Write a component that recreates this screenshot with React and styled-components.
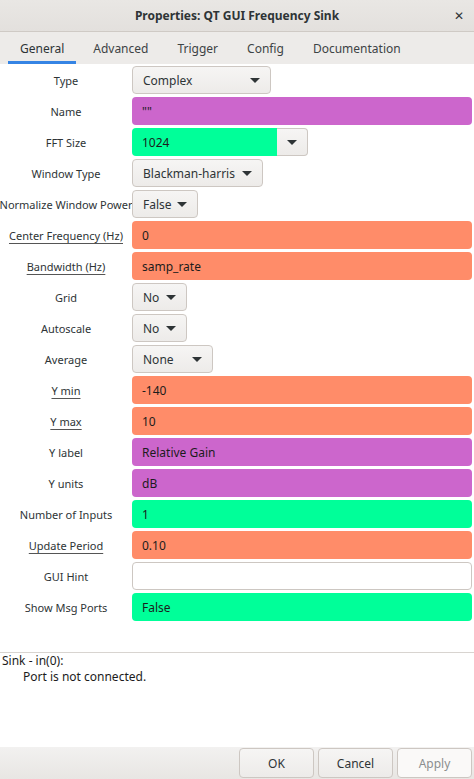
import styled, { createGlobalStyle } from "styled-components";

const Global = createGlobalStyle`
  html, body { margin: 0; padding: 0; background: #ffffff; }
  body { font-family: "Noto Sans", "DejaVu Sans", sans-serif; color: #2e3436; }
`;

const Window = styled.div`
  width: 474px;
  height: 779px;
  display: flex;
  flex-direction: column;
  background: #ffffff;
  overflow: hidden;
`;

const TitleBar = styled.div`
  height: 31px;
  flex: none;
  display: flex;
  align-items: center;
  justify-content: center;
  position: relative;
  background: linear-gradient(#e9e7e4, #e3e0dd);
  border-bottom: 1px solid #cfcac5;
  font-size: 12px;
  font-weight: bold;
  color: #2e3436;
`;

const Close = styled.span`
  position: absolute;
  right: 10px;
  top: 7px;
  font-size: 12px;
  font-weight: bold;
  color: #2e3436;
`;

const Tabs = styled.div`
  height: 32px;
  flex: none;
  display: flex;
  align-items: stretch;
  background: #edebe9;
  padding-left: 8px;
  gap: 5px;
`;

const Tab = styled.div`
  display: flex;
  align-items: center;
  padding: 0 12px;
  font-size: 12px;
  color: ${({ active }) => (active ? "#2e3436" : "#3d4345")};
  box-shadow: ${({ active }) => (active ? "inset 0 -3px 0 #3584e4" : "none")};
`;

const Form = styled.div`
  display: grid;
  grid-template-columns: 132px 1fr;
  grid-auto-rows: 28px;
  row-gap: 3px;
  padding: 2px 2px 0 0;
  flex: none;
`;

const Label = styled.div`
  display: flex;
  align-items: center;
  justify-content: center;
  font-size: 11px;
  white-space: nowrap;
  color: #2e3436;
  span {
    text-decoration: ${({ under }) => (under ? "underline" : "none")};
    text-underline-offset: 3px;
    text-decoration-color: #555;
  }
`;

const Field = styled.div`
  display: flex;
  align-items: center;
  padding-left: 10px;
  box-sizing: border-box;
  border-radius: 4px;
  font-size: 12px;
  color: #1c1c1c;
  background: ${({ bg }) => bg};
  border: ${({ bg }) => (bg === "#ffffff" ? "1px solid #cdc7c2" : "none")};
`;

const ComboWrap = styled.div`
  display: flex;
`;

const Combo = styled.div`
  width: ${({ w }) => w}px;
  box-sizing: border-box;
  display: flex;
  align-items: center;
  justify-content: space-between;
  gap: 5px;
  padding: 0 10px;
  white-space: nowrap;
  border: 1px solid #cdc7c2;
  border-radius: 4px;
  background: linear-gradient(#f6f5f4, #edebe9);
  font-size: 12px;
  color: #2e3436;
`;

const Entry = styled.div`
  width: 145px;
  display: flex;
  align-items: center;
  padding-left: 10px;
  box-sizing: border-box;
  background: #00ff99;
  border-radius: 4px 0 0 4px;
  font-size: 12px;
  color: #1c1c1c;
`;

const DropBtn = styled.div`
  width: 30px;
  display: flex;
  align-items: center;
  justify-content: center;
  border: 1px solid #cdc7c2;
  border-left: none;
  border-radius: 0 4px 4px 0;
  background: linear-gradient(#f6f5f4, #edebe9);
`;

const Arrow = styled.span`
  flex: none;
  width: 0;
  height: 0;
  border-left: 5px solid transparent;
  border-right: 5px solid transparent;
  border-top: 5px solid #2e3436;
`;

const Divider = styled.div`
  margin-top: 31px;
  border-top: 1px solid #d8d4d0;
`;

const Messages = styled.div`
  flex: 1;
  padding: 0 2px;
  font-size: 12px;
  line-height: 16px;
  color: #1c1c1c;
`;

const Indent = styled.div`
  padding-left: 21px;
`;

const ButtonBar = styled.div`
  height: 32px;
  flex: none;
  display: flex;
  justify-content: flex-end;
  align-items: center;
  gap: 4px;
  padding-right: 2px;
  background: linear-gradient(#f2f1f0, #e8e6e3);
`;

const Button = styled.div`
  width: 75px;
  height: 30px;
  box-sizing: border-box;
  display: flex;
  align-items: center;
  justify-content: center;
  border: 1px solid #cdc7c2;
  border-radius: 4px;
  background: ${({ disabled }) => (disabled ? "#faf9f8" : "linear-gradient(#f6f5f4, #edebe9)")};
  color: ${({ disabled }) => (disabled ? "#8b8e8f" : "#2e3436")};
  font-size: 12px;
`;

const PURPLE = "#cc66cc";
const GREEN = "#00ff99";
const ORANGE = "#ff8c69";

const rows = [
  { label: "Type", combo: "Complex", w: 139 },
  { label: "Name", value: '""', bg: PURPLE },
  { label: "FFT Size", fft: "1024" },
  { label: "Window Type", combo: "Blackman-harris", w: 131 },
  { label: "Normalize Window Power", combo: "False", w: 66 },
  { label: "Center Frequency (Hz)", value: "0", bg: ORANGE, under: true },
  { label: "Bandwidth (Hz)", value: "samp_rate", bg: ORANGE, under: true },
  { label: "Grid", combo: "No", w: 55 },
  { label: "Autoscale", combo: "No", w: 55 },
  { label: "Average", combo: "None", w: 81 },
  { label: "Y min", value: "-140", bg: ORANGE, under: true },
  { label: "Y max", value: "10", bg: ORANGE, under: true },
  { label: "Y label", value: "Relative Gain", bg: PURPLE },
  { label: "Y units", value: "dB", bg: PURPLE },
  { label: "Number of Inputs", value: "1", bg: GREEN },
  { label: "Update Period", value: "0.10", bg: ORANGE, under: true },
  { label: "GUI Hint", value: "", bg: "#ffffff" },
  { label: "Show Msg Ports", value: "False", bg: GREEN },
];

const tabs = ["General", "Advanced", "Trigger", "Config", "Documentation"];

const renderField = (r) => {
  if (r.combo) {
    return (
      <ComboWrap key={r.label + "f"}>
        <Combo w={r.w}>
          <span>{r.combo}</span>
          <Arrow />
        </Combo>
      </ComboWrap>
    );
  }
  if (r.fft) {
    return (
      <ComboWrap key={r.label + "f"}>
        <Entry>{r.fft}</Entry>
        <DropBtn>
          <Arrow />
        </DropBtn>
      </ComboWrap>
    );
  }
  return (
    <Field key={r.label + "f"} bg={r.bg}>
      {r.value}
    </Field>
  );
};

export default function App() {
  return (
    <Window>
      <Global />
      <TitleBar>
        Properties: QT GUI Frequency Sink
        <Close>✕</Close>
      </TitleBar>
      <Tabs>
        {tabs.map((t, i) => (
          <Tab key={t} active={i === 0}>
            {t}
          </Tab>
        ))}
      </Tabs>
      <Form>
        {rows.map((r) => [
          <Label key={r.label + "l"} under={r.under}>
            <span>{r.label}</span>
          </Label>,
          renderField(r),
        ])}
      </Form>
      <Divider />
      <Messages>
        <div>Sink - in(0):</div>
        <Indent>Port is not connected.</Indent>
      </Messages>
      <ButtonBar>
        <Button>OK</Button>
        <Button>Cancel</Button>
        <Button disabled>Apply</Button>
      </ButtonBar>
    </Window>
  );
}
